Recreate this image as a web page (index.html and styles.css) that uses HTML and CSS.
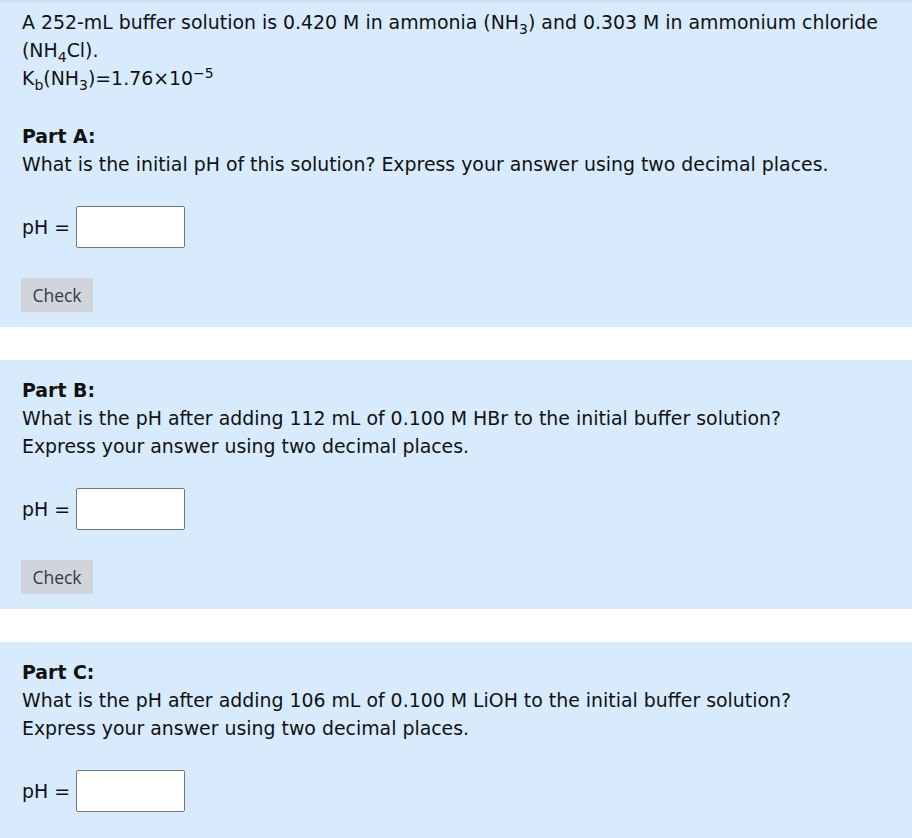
FILE: index.html
```html
<!DOCTYPE html>
<html>
<head>
<meta charset="utf-8">
<link rel="stylesheet" href="styles.css">
</head>
<body>
<section class="panel first">
  <p class="intro">A 252-mL buffer solution is 0.420 M in ammonia (NH<sub>3</sub>) and 0.303 M in ammonium chloride (NH<sub>4</sub>Cl).<br>K<sub>b</sub>(NH<sub>3</sub>)=1.76×10<sup>−5</sup></p>
  <h3 class="part">Part A:</h3>
  <p class="q">What is the initial pH of this solution? Express your answer using two decimal places.</p>
  <div class="answer"><span class="lbl">pH =</span><input class="box" type="text"></div>
  <button class="check">Check</button>
</section>
<section class="panel">
  <h3 class="part">Part B:</h3>
  <p class="q">What is the pH after adding 112 mL of 0.100 M HBr to the initial buffer solution?<br>Express your answer using two decimal places.</p>
  <div class="answer"><span class="lbl">pH =</span><input class="box" type="text"></div>
  <button class="check">Check</button>
</section>
<section class="panel">
  <h3 class="part">Part C:</h3>
  <p class="q">What is the pH after adding 106 mL of 0.100 M LiOH to the initial buffer solution?<br>Express your answer using two decimal places.</p>
  <div class="answer"><span class="lbl">pH =</span><input class="box" type="text"></div>
  <button class="check">Check</button>
</section>
</body>
</html>
```
FILE: styles.css
```css
html, body {
  margin: 0;
  padding: 0;
  background: #ffffff;
}
body {
  font-family: "DejaVu Sans", Verdana, sans-serif;
  font-size: 18.9px;
  line-height: 28px;
  color: #111111;
}
.panel {
  background: #d7ebfc;
  padding: 16px 22px 15px 22px;
  margin-bottom: 33px;
}
.panel.first {
  padding-top: 8px;
  background: linear-gradient(#c9def0 0px, #d7ebfc 4px);
}
p, h3 {
  margin: 0;
}
sub, sup {
  font-size: 14px;
  line-height: 0;
}
.intro {
  margin-bottom: 30px;
}
.part {
  font-size: 18.9px;
  font-weight: bold;
}
.answer {
  display: flex;
  align-items: center;
  margin-top: 28px;
  height: 42px;
}
.lbl {
  margin-right: 6px;
}
.box {
  width: 109px;
  height: 42px;
  box-sizing: border-box;
  border: 1px solid #767676;
  border-radius: 2px;
  background: #ffffff;
  padding: 0;
  margin: 0;
}
.check {
  display: block;
  margin-top: 30px;
  margin-left: -1px;
  width: 72px;
  height: 34px;
  border: none;
  border-radius: 0;
  background: #d1d5db;
  color: #333a44;
  font-family: "Open Sans", "Noto Sans", sans-serif;
  font-size: 17.5px;
  padding: 0;
}
```
